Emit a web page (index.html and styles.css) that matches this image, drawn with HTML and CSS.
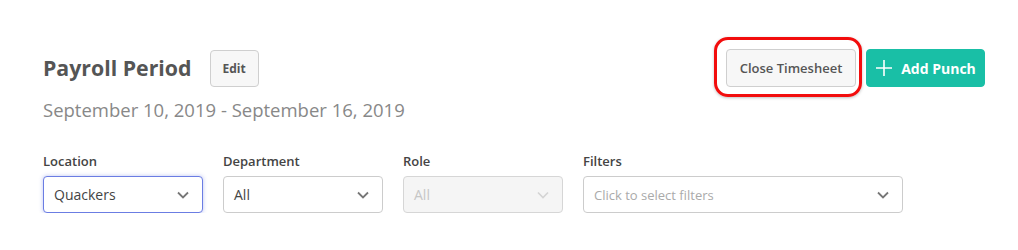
FILE: index.html
```html
<!DOCTYPE html>
<html>
<head>
<meta charset="utf-8">
<link rel="stylesheet" href="styles.css">
</head>
<body>
<div class="page">
  <div class="header">
    <div class="title-group">
      <h1 class="title">Payroll Period</h1>
      <button class="btn btn-small">Edit</button>
    </div>
    <div class="actions">
      <div class="highlight-wrap">
        <span class="highlight"></span>
        <button class="btn btn-default">Close Timesheet</button>
      </div>
      <button class="btn btn-primary">
        <svg class="plus" viewBox="0 0 18 18" width="18" height="18"><path d="M9 1v16M1 9h16" stroke="#fff" stroke-width="1.6" fill="none"/></svg>
        Add Punch
      </button>
    </div>
  </div>
  <div class="date">September 10, 2019 - September 16, 2019</div>
  <div class="filters">
    <div class="field">
      <label class="label">Location</label>
      <div class="select focused"><span class="value">Quackers</span><svg class="chev" viewBox="0 0 12 8" width="12" height="8"><path d="M1 1.5l5 5 5-5" stroke="#777" stroke-width="1.8" fill="none"/></svg></div>
    </div>
    <div class="field">
      <label class="label">Department</label>
      <div class="select"><span class="value">All</span><svg class="chev" viewBox="0 0 12 8" width="12" height="8"><path d="M1 1.5l5 5 5-5" stroke="#777" stroke-width="1.8" fill="none"/></svg></div>
    </div>
    <div class="field">
      <label class="label">Role</label>
      <div class="select disabled"><span class="value">All</span><svg class="chev" viewBox="0 0 12 8" width="12" height="8"><path d="M1 1.5l5 5 5-5" stroke="#d4d4d4" stroke-width="1.6" fill="none"/></svg></div>
    </div>
    <div class="field wide">
      <label class="label">Filters</label>
      <div class="select"><span class="value placeholder">Click to select filters</span><svg class="chev" viewBox="0 0 12 8" width="12" height="8"><path d="M1 1.5l5 5 5-5" stroke="#777" stroke-width="1.8" fill="none"/></svg></div>
    </div>
  </div>
</div>
</body>
</html>
```
FILE: styles.css
```css
* { box-sizing: border-box; }
body {
  margin: 0;
  background: #fff;
  font-family: "Open Sans", "Lato", sans-serif;
  color: #444;
}
.page {
  padding: 49px 33px 0 43px;
}
.header {
  display: flex;
  justify-content: space-between;
  align-items: center;
}
.title-group {
  display: flex;
  align-items: center;
  gap: 18px;
}
.title {
  margin: 0;
  font-size: 21.3px;
  font-weight: 700;
  color: #555;
  line-height: 28px;
}
.btn {
  font-family: inherit;
  border-radius: 4px;
  cursor: pointer;
  height: 38px;
}
.btn-small {
  width: 49px;
  height: 37px;
  font-size: 12px;
  font-weight: 700;
  color: #555;
  background: #f7f7f7;
  border: 1px solid #cfcfcf;
  padding: 0;
}
.actions {
  display: flex;
  align-items: center;
  gap: 10px;
}
.highlight-wrap {
  position: relative;
}
.highlight {
  position: absolute;
  left: -12px;
  right: -6px;
  top: -12px;
  bottom: -10px;
  border: 3px solid #f20d0d;
  border-radius: 14px;
  box-shadow: 0 1px 3px rgba(0,0,0,0.25);
  pointer-events: none;
}
.btn-default {
  width: 130px;
  font-size: 13px;
  font-weight: 600;
  color: #555;
  background: #f7f7f7;
  border: 1px solid #cfcfcf;
  padding: 0;
}
.btn-primary {
  width: 119px;
  display: flex;
  align-items: center;
  justify-content: center;
  gap: 8px;
  font-size: 14px;
  font-weight: 700;
  color: #fff;
  background: #19bfa6;
  border: 1px solid #19bfa6;
  padding: 0;
}
.plus { display: block; }
.date {
  margin-top: 12px;
  font-size: 18.5px;
  line-height: 22px;
  color: #888;
}
.filters {
  display: flex;
  gap: 20px;
  margin-top: 32px;
}
.field {
  display: flex;
  flex-direction: column;
  width: 160px;
}
.field.wide { width: 320px; }
.label {
  font-size: 13px;
  font-weight: 600;
  color: #444;
  line-height: 16px;
  margin-bottom: 7px;
}
.select {
  height: 37px;
  border: 1px solid #cccccc;
  border-radius: 4px;
  background: #fff;
  display: flex;
  align-items: center;
  justify-content: space-between;
  padding: 0 13px 0 10px;
}
.select.focused {
  border-color: #6b7de3;
  box-shadow: 0 0 4px rgba(107,125,227,0.45);
}
.select.disabled {
  background: #f5f5f5;
  border-color: #d6d6d6;
}
.value {
  font-size: 14px;
  color: #444;
}
.disabled .value { color: #c6c6c6; }
.value.placeholder { color: #aaa; font-size: 13px; }
.chev { display: block; }
```
